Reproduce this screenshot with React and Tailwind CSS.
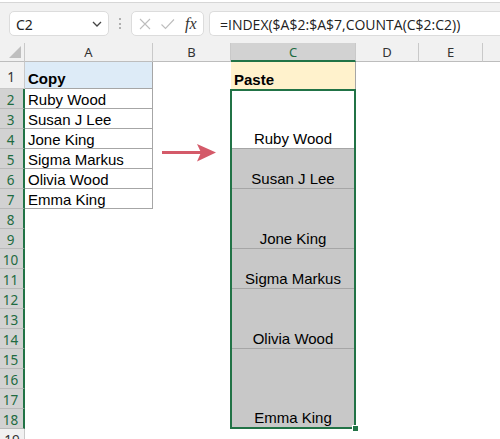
import React from "react";

const ui = { fontFamily: '"Noto Sans", "Open Sans", sans-serif' };
const cellFont = { fontFamily: '"Liberation Sans", Arial, sans-serif' };

function RowHeader({ n, selected, h }) {
  return (
    <div
      className={
        "flex items-center justify-center text-[13.5px] border-b " +
        (selected
          ? "bg-[#d2d2d2] text-[#1e6b41] border-b-[#b9b9b9] border-r-2 border-r-[#217346]"
          : "bg-[#f1f1f1] text-[#333] border-b-[#c9c9c9] border-r border-r-[#c9c9c9]")
      }
      style={{ ...ui, height: h }}
    >
      <span className="pr-[2px] translate-y-[2px]">{n}</span>
    </div>
  );
}

function ColHeader({ label, selected }) {
  return (
    <div
      className={
        "flex items-center justify-center text-[13px] border-r border-r-[#c9c9c9] " +
        (selected
          ? "bg-[#d2d2d2] text-[#1e6b41] border-b-2 border-b-[#217346]"
          : "bg-[#f1f1f1] text-[#333] border-b border-b-[#bdbdbd]")
      }
      style={ui}
    >
      <span className="translate-y-[1px]">{label}</span>
    </div>
  );
}

export default function App() {
  const copy = ["Ruby Wood", "Susan J Lee", "Jone King", "Sigma Markus", "Olivia Wood", "Emma King"];
  const groups = [
    { t: "Ruby Wood", h: "h-[58px]", bg: "bg-white", b: true },
    { t: "Susan J Lee", h: "h-[40px]", bg: "bg-[#c8c8c8]", b: true },
    { t: "Jone King", h: "h-[60px]", bg: "bg-[#c8c8c8]", b: true },
    { t: "Sigma Markus", h: "h-[40px]", bg: "bg-[#c8c8c8]", b: true },
    { t: "Olivia Wood", h: "h-[60px]", bg: "bg-[#c8c8c8]", b: true },
    { t: "Emma King", h: "flex-1", bg: "bg-[#c8c8c8]", b: false },
  ];
  const rows = Array.from({ length: 17 }, (_, i) => i + 2);

  return (
    <div className="w-[500px] h-[439px] overflow-hidden bg-white flex flex-col">
      {/* top strip */}
      <div className="h-[3px] bg-white border-b border-[#d6d6d6] shrink-0" />
      {/* formula bar */}
      <div className="h-[40px] bg-[#f1f1f1] flex items-start pt-[8px] pl-[9px] shrink-0" style={ui}>
        <div className="w-[100px] h-[25px] bg-white border border-[#dcdcdc] rounded-[5px] flex items-center justify-between pl-[6px] pr-[5px]">
          <span className="text-[14px] text-[#222] translate-y-[1px]">C2</span>
          <svg width="12" height="12" viewBox="0 0 12 12">
            <path d="M2 4 L6 8 L10 4" fill="none" stroke="#444" strokeWidth="1.3" />
          </svg>
        </div>
        <div className="w-[22px] h-[25px] flex flex-col items-center justify-center gap-[2.5px]">
          <div className="w-[2px] h-[2px] bg-[#9a9a9a] rounded-full" />
          <div className="w-[2px] h-[2px] bg-[#9a9a9a] rounded-full" />
          <div className="w-[2px] h-[2px] bg-[#9a9a9a] rounded-full" />
        </div>
        <div className="w-[73px] h-[25px] bg-white border border-[#dcdcdc] rounded-[5px] flex items-center pl-[6px]">
          <svg width="14" height="14" viewBox="0 0 14 14">
            <path d="M2 2 L12 12 M12 2 L2 12" stroke="#bdbdbd" strokeWidth="1.1" />
          </svg>
          <svg width="16" height="14" viewBox="0 0 16 14" className="ml-[8px]">
            <path d="M1.5 7.5 L5.5 11.5 L14 2.5" fill="none" stroke="#bdbdbd" strokeWidth="1.1" />
          </svg>
          <span
            className="ml-[9px] text-[16px] italic text-[#333] leading-none"
            style={{ fontFamily: '"Liberation Serif", "Times New Roman", serif' }}
          >
            fx
          </span>
        </div>
        <div className="ml-[5px] flex-1 h-[25px] bg-white border border-[#dcdcdc] rounded-l-[5px] border-r-0 flex items-center pl-[10px]">
          <span className="text-[14px] text-[#222] whitespace-nowrap translate-y-[1px]" style={{ fontFamily: '"Open Sans", "Noto Sans", sans-serif' }}>
            =INDEX($A$2:$A$7,COUNTA(C$2:C2))
          </span>
        </div>
      </div>

      {/* sheet */}
      <div
        className="relative grid flex-1 min-h-0"
        style={{
          gridTemplateColumns: "25px 128px 78px 125px 63px 64px 1fr",
          gridTemplateRows: "19px 27px repeat(17, 20px) 1fr",
        }}
      >
        {/* header row */}
        <div className="bg-[#f1f1f1] border-r border-r-[#c9c9c9] border-b border-b-[#bdbdbd] flex items-end justify-end pr-[3px] pb-[3px]">
          <svg width="12" height="12" viewBox="0 0 12 12">
            <path d="M12 0 L12 12 L0 12 Z" fill="#bfbfbf" />
          </svg>
        </div>
        <ColHeader label="A" />
        <ColHeader label="B" />
        <ColHeader label="C" selected />
        <ColHeader label="D" />
        <ColHeader label="E" />
        <div className="bg-[#f1f1f1] border-b border-b-[#bdbdbd]" />

        {/* row 1 */}
        <RowHeader n={1} h={27} />
        <div
          className="bg-[#ddebf7] border-r border-b border-[#a6a6a6] flex items-end pl-[3px] text-[15px] font-bold text-black leading-[20px]"
          style={cellFont}
        >
          <span className="translate-y-[1px]">Copy</span>
        </div>
        <div />
        <div
          className="bg-[#fff2cc] border-r border-[#a6a6a6] flex items-end pl-[3px] text-[15px] font-bold text-black leading-[20px]"
          style={cellFont}
        >
          <span className="translate-y-[1px]">Paste</span>
        </div>
        <div />
        <div />
        <div />

        {/* row headers 2-18 */}
        {rows.map((n) => (
          <div key={n} style={{ gridColumn: 1, gridRow: n + 1 }}>
            <RowHeader n={n} selected h={20} />
          </div>
        ))}
        <div style={{ gridColumn: 1, gridRow: 20 }} className="bg-[#f1f1f1] border-r border-r-[#c9c9c9] flex justify-center pt-[3px] text-[13.5px] leading-[16px] text-[#333]">
          <span style={ui}>19</span>
        </div>

        {/* column A data */}
        {copy.map((t, i) => (
          <div
            key={t}
            style={{ ...cellFont, gridColumn: 2, gridRow: i + 3 }}
            className="border-r border-b border-[#a6a6a6] flex items-end pl-[3px] text-[15px] text-black leading-[20px]"
          >
            <span className="translate-y-[2px]">{t}</span>
          </div>
        ))}

        {/* column C merged */}
        <div
          style={{ gridColumn: 4, gridRow: "3 / 20" }}
          className="relative ml-[-1px] border-2 border-[#217346] flex flex-col"
        >
          {groups.map((g) => (
            <div
              key={g.t}
              className={
                g.h + " " + g.bg + " flex items-end justify-center text-[15px] text-black leading-[20px] shrink-0 " +
                (g.b ? "border-b border-[#a6a6a6]" : "")
              }
              style={cellFont}
            >
              <span className="translate-y-[1px]">{g.t}</span>
            </div>
          ))}
          <div className="absolute right-[-5px] bottom-[-5px] w-[7px] h-[7px] bg-[#217346] border border-white" />
        </div>

        {/* arrow */}
        <svg
          className="absolute left-[160px] top-[100px]"
          width="58"
          height="20"
          viewBox="0 0 58 20"
        >
          <path d="M2 9.5 L42 9.5" stroke="#d45a69" strokeWidth="3" />
          <path d="M37 1 L56 9.5 L37 18.5 L41 9.5 Z" fill="#d45a69" />
        </svg>
      </div>
    </div>
  );
}
